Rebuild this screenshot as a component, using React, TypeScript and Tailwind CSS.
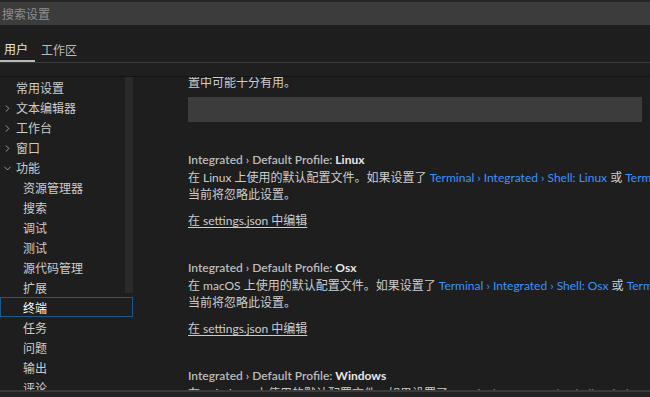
import { ChevronRight, ChevronDown } from "lucide-react";

const font = {
  fontFamily: 'Lato, "Noto Sans CJK SC", sans-serif',
};

type NavItem = { label: string; level: 0 | 1; chevron?: "right" | "down"; selected?: boolean };

const nav: NavItem[] = [
  { label: "常用设置", level: 0 },
  { label: "文本编辑器", level: 0, chevron: "right" },
  { label: "工作台", level: 0, chevron: "right" },
  { label: "窗口", level: 0, chevron: "right" },
  { label: "功能", level: 0, chevron: "down" },
  { label: "资源管理器", level: 1 },
  { label: "搜索", level: 1 },
  { label: "调试", level: 1 },
  { label: "测试", level: 1 },
  { label: "源代码管理", level: 1 },
  { label: "扩展", level: 1 },
  { label: "终端", level: 1, selected: true },
  { label: "任务", level: 1 },
  { label: "问题", level: 1 },
  { label: "输出", level: 1 },
  { label: "评论", level: 1 },
];

function Sidebar() {
  return (
    <div className="relative w-[133px] shrink-0 overflow-hidden">
      {nav.map((item) => (
        <div
          key={item.label}
          className={`flex h-[20px] items-center pt-[3px] text-[12px] leading-[17px] ${
            item.selected ? "border border-[#17598a] text-white" : "border border-transparent text-[#cccccc]"
          } ${item.level === 0 ? "pl-[1px]" : "pl-[22px]"}`}
        >
          {item.level === 0 && (
            <span className="flex w-[14px] items-center">
              {item.chevron === "right" && <ChevronRight size={11} strokeWidth={1.6} className="text-[#c5c5c5]" />}
              {item.chevron === "down" && <ChevronDown size={11} strokeWidth={1.6} className="text-[#c5c5c5]" />}
            </span>
          )}
          <span>{item.label}</span>
        </div>
      ))}
      {/* scrollbar slider */}
      <div className="absolute right-0 top-0 h-[216px] w-[8px] bg-[#2a2a2a]" />
    </div>
  );
}

function Setting({
  label,
  os,
  shell,
}: {
  label: string;
  os: string;
  shell: string;
}) {
  return (
    <div className="pb-[30px]">
      <div className="text-[12px] leading-[18px] whitespace-nowrap">
        <span className="font-semibold text-[#bbbbbb]">Integrated › Default Profile: </span>
        <span className="font-bold text-[#e7e7e7]">{label}</span>
      </div>
      <div className="text-[12px] leading-[17px] text-[#cccccc] whitespace-nowrap">
        <div>
          在 {os} 上使用的默认配置文件。如果设置了{" "}
          <span className="text-[#3794ff]">Terminal › Integrated › Shell: {shell}</span> 或{" "}
          <span className="text-[#3794ff]">Terminal › Integrated › Shell Args: {shell}</span>，则
        </div>
        <div>当前将忽略此设置。</div>
      </div>
      <div className="mt-[9px] text-[12px] leading-[17px] text-[#cccccc]">
        <span className="underline underline-offset-2">在 settings.json 中编辑</span>
      </div>
    </div>
  );
}

export default function App() {
  return (
    <div className="flex h-[397px] w-[650px] flex-col overflow-hidden bg-[#1e1e1e]" style={font}>
      {/* search */}
      <div className="h-[2px] bg-[#262626]" />
      <div className="flex h-[23px] items-center bg-[#3c3c3c] pl-[2px] pt-[3px] text-[12px] text-[#8f8f8f]">
        搜索设置
      </div>

      {/* tabs */}
      <div className="flex h-[38px] items-end border-b border-[#383838]">
        <div className="flex h-full w-[35px] items-center border-b-2 border-[#b8b8b8] pl-[4px] pt-[14px] text-[12px] text-[#e7e7e7]">
          用户
        </div>
        <div className="flex h-full items-center pl-[6px] pt-[14px] text-[12px] text-[#bbbbbb]">工作区</div>
      </div>
      <div className="h-[14px] border-b border-[#141414] bg-[#1f1f1f]" />

      {/* main */}
      <div className="flex min-h-0 flex-1 overflow-hidden">
        <Sidebar />
        <div className="min-w-0 flex-1 overflow-hidden pl-[55px]">
          <div className="-mt-[3px] text-[12px] leading-[17px] text-[#cccccc]">置中可能十分有用。</div>
          <div className="mt-[6px] mb-[29px] h-[25px] w-[454px] bg-[#3c3c3c]" />
          <Setting label="Linux" os="Linux" shell="Linux" />
          <Setting label="Osx" os="macOS" shell="Osx" />
          <Setting label="Windows" os="Windows" shell="Windows" />
        </div>
      </div>

      {/* bottom */}
      <div className="h-[7px] shrink-0 border-t-2 border-[#3a3a3a] bg-[#232323]" />
    </div>
  );
}
